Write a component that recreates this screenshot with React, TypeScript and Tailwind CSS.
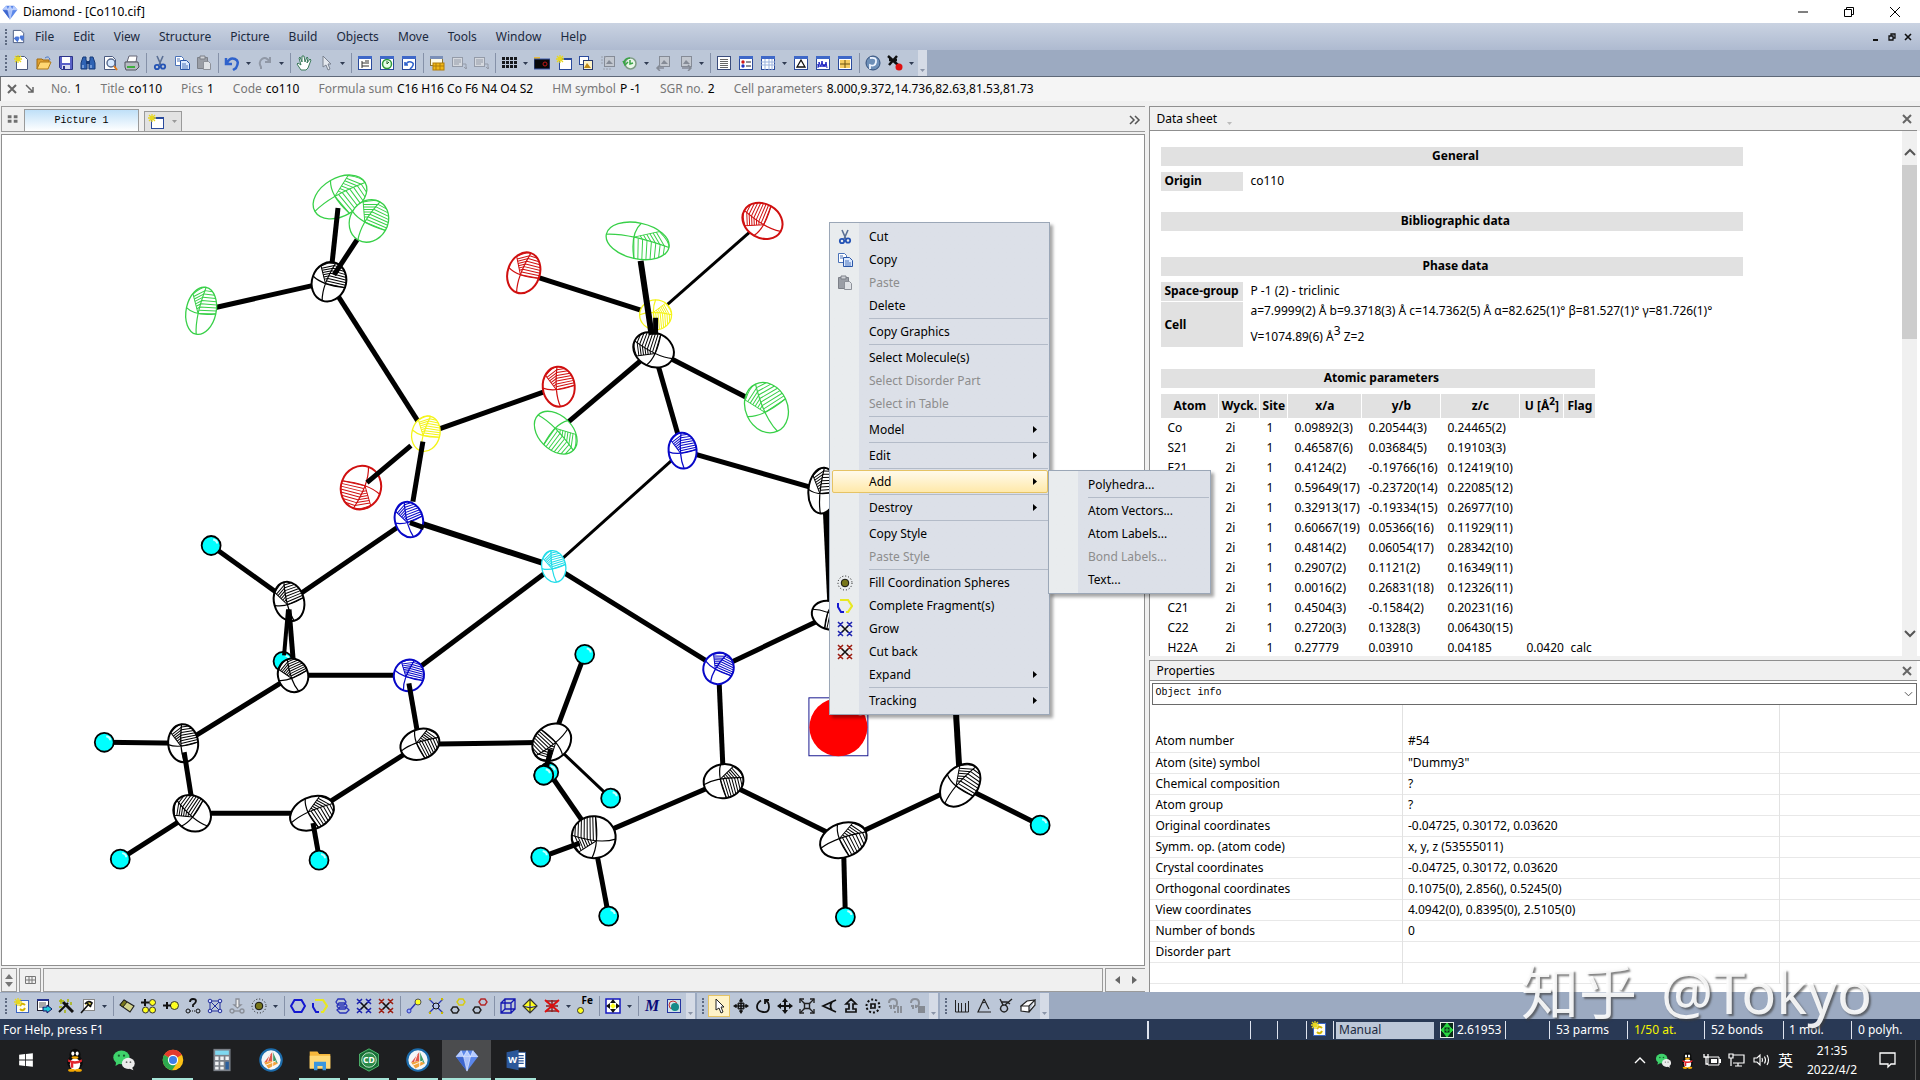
import type { ReactNode } from "react";

/* ---------- 16px toolbar glyphs ---------- */

const sheet = (
  <path d="M2.5 1.5h8l3 3v10h-11z" fill="#fff" stroke="#4a5a80" />
);
const windowFrame = (
  <>
    <rect x="1.5" y="1.5" width="13" height="13" fill="#fff" stroke="#2a4a9c" />
    <rect x="1" y="1" width="14" height="3" fill="#3f68c8" />
  </>
);
const star = (
  <path d="M4 0v8M0 4h8M1 1l6 6M7 1L1 7" stroke="#e8d820" strokeWidth="1.3" />
);
const crossGrid = (a: string, b: string) => (
  <>
    <path d="M1 1l5 5M6 1L1 6M10 1l5 5M15 1l-5 5M1 10l5 5M6 10l-5 5M10 10l5 5M15 10l-5 5" stroke={a} strokeWidth="1.5" />
    <path d="M5 5l6 6M11 5l-6 6" stroke={b} strokeWidth="1.5" />
  </>
);
const greyWindow = (
  <>
    <rect x="1.5" y="2.5" width="10" height="9" fill="#d4d8de" stroke="#949ba8" />
    <path d="M3 5h7M3 7h7M3 9h5" stroke="#949ba8" />
    <path d="M11 9h4v5M13 12l2 2 1-2" stroke="#949ba8" fill="none" />
  </>
);
const greyPicture = (
  <>
    <rect x="4.5" y="1.5" width="10" height="10" fill="#c2c7cf" stroke="#858b96" />
    <path d="M6 9l3-4 4 4z" fill="#858b96" />
  </>
);
const twoRings = (a: string, b: string) => (
  <>
    <path d="M7 4l2-3h4l2 3-2 3H9z" fill="none" stroke={a} strokeWidth="1.4" />
    <path d="M1 12l2-3h4l2 3-2 3H3z" fill="none" stroke={b} strokeWidth="1.4" />
  </>
);

const glyphs: Record<string, ReactNode> = {
  new: <>{sheet}{star}</>,
  open: (
    <>
      <path d="M1 14V4h5l1 1h6v3" fill="#e0a030" stroke="#a06a10" />
      <path d="M1 14l3-7h11l-3 7z" fill="#ffd873" stroke="#b07a18" />
      <path d="M9 3q4-3 5 2" fill="none" stroke="#4a78c8" />
    </>
  ),
  save: (
    <>
      <path d="M1.5 1.5h13v13h-11l-2-2z" fill="#5a62c8" stroke="#2c3488" />
      <rect x="4" y="2" width="8" height="6" fill="#fff" />
      <rect x="4" y="10" width="8" height="4" fill="#d8dcf0" />
      <rect x="5" y="11" width="2" height="3" fill="#2c3488" />
    </>
  ),
  find: (
    <>
      <path d="M3 2h3v3l1 2v7H1V8zM10 2h3l2 6v6H9V7l1-2z" fill="#2f63b4" stroke="#173a78" />
      <path d="M6 6h4v3H6z" fill="#173a78" />
      <path d="M3 10v3M11 10v3" stroke="#b8d4ff" />
    </>
  ),
  preview: (
    <>
      {sheet}
      <circle cx="9" cy="8" r="4" fill="#d6e8ff" stroke="#55688c" strokeWidth="1.4" />
      <path d="M12 11l3 4" stroke="#e07818" strokeWidth="2" />
    </>
  ),
  print: (
    <>
      <path d="M5 1h8l-1 6H3z" fill="#fff" stroke="#667" />
      <path d="M1 7h13l1 5-3 3H2l-1-3z" fill="#b8bcc4" stroke="#50555e" />
      <path d="M3 12h8" stroke="#3fae3f" strokeWidth="2" />
    </>
  ),
  cut: (
    <>
      <path d="M5 1l4 9M11 1L7 10" stroke="#5a6f94" strokeWidth="1.6" />
      <circle cx="5" cy="12" r="2.2" fill="none" stroke="#2453b5" strokeWidth="1.8" />
      <circle cx="11" cy="11.5" r="2.2" fill="none" stroke="#2453b5" strokeWidth="1.8" />
    </>
  ),
  copy: (
    <>
      <path d="M1.5 1.5h6l2 2v7h-8z" fill="#fff" stroke="#4a72b8" />
      <path d="M6.5 5.5h6l3 3v6h-9z" fill="#dbe9ff" stroke="#2a56a8" />
      <path d="M3 4h3M3 6h3M8 9h4M8 11h6M8 13h6" stroke="#4a72b8" />
    </>
  ),
  paste: (
    <>
      <path d="M1.5 2.5h10v11h-10z" fill="#9a9ea6" stroke="#7c8088" />
      <path d="M4 1h5v3H4z" fill="#d0d3d8" stroke="#7c8088" />
      <path d="M7.5 6.5h5l2 2v6h-7z" fill="#dfe2e6" stroke="#8d9199" />
    </>
  ),
  undo: <path d="M2 3v6h6M3 8q3-6 8-4t1 9l-3 2" fill="none" stroke="#2f62cc" strokeWidth="2.5" />,
  redo: <path d="M13 2v5H8M13 7Q9 1 5 4t-1 8v2" fill="none" stroke="#9098a6" strokeWidth="2" />,
  hand: (
    <path d="M5 15L1 9l1-1 3 2-2-7 1-1 2 5V1h2l1 6 2-5 1 1-1 5 3-4 1 1-3 8-2 2z" fill="#fff" stroke="#3a7a5a" />
  ),
  pointer: <path d="M5 1v11l3-2 2 5 2-1-2-5h3z" fill="#e4e8ee" stroke="#7a8290" />,
  tree: <>{windowFrame}<path d="M5 6v7M5 8h7M5 11h7M8 6h4" stroke="#333" /></>,
  history: (
    <>
      {windowFrame}
      <circle cx="8" cy="9" r="4.5" fill="#e7ffe7" stroke="#2f9a3a" strokeWidth="1.5" />
      <path d="M8 6v3l2-2" stroke="#24602a" fill="none" />
    </>
  ),
  undoWindow: <>{windowFrame}<path d="M4 7v3h3M5 10q1-4 5-3t1 5l-2 2" fill="none" stroke="#2f62cc" strokeWidth="1.6" /></>,
  chartTable: (
    <>
      <rect x="1.5" y="1.5" width="12" height="9" fill="#fffbe8" stroke="#8a7430" />
      <rect x="1" y="1" width="13" height="3" fill="#7a8fb8" />
      <rect x="4" y="8" width="11" height="7" fill="#f0b818" stroke="#b07c08" />
      <path d="M7 8v7M11 8v7M4 11h11" stroke="#b07c08" />
    </>
  ),
  greyA: greyWindow,
  greyB: greyWindow,
  grid: (
    <path d="M1 2h3v3H1zM5 2h3v3H5zM9 2h3v3H9zM13 2h3v3h-3zM1 6h3v3H1zM5 6h3v3H5zM9 6h3v3H9zM13 6h3v3h-3zM1 10h3v3H1zM5 10h3v3H5zM9 10h3v3H9zM13 10h3v3h-3z" fill="#16181c" />
  ),
  blackPic: (
    <>
      <path d="M0 4V2h6v2z" fill="#e8b93c" />
      <rect x="0" y="4" width="16" height="10" fill="#080808" stroke="#3a58a8" />
      <circle cx="11" cy="9" r="2" fill="none" stroke="#c01818" />
    </>
  ),
  newPic: (
    <>
      <rect x="3.5" y="3.5" width="12" height="11" fill="#fff" stroke="#2a4a9c" />
      <path d="M3 4h13" stroke="#2a4a9c" strokeWidth="2" />
      {star}
    </>
  ),
  pics: (
    <>
      <rect x="1.5" y="1.5" width="9" height="8" fill="#fff" stroke="#2a4a9c" />
      <rect x="5.5" y="5.5" width="9" height="9" fill="#fff4c8" stroke="#2a3a6c" />
      <path d="M6 13l3-5 4 5z" fill="#c08a18" />
    </>
  ),
  greyPics: <>{greyPicture}<path d="M1 2h6M1 5h3M1 8h3M3 14h8" stroke="#9aa0ac" strokeDasharray="2 1" /></>,
  refresh: (
    <>
      <circle cx="8.5" cy="8.5" r="5.5" fill="#e8f6e8" stroke="#7d9c84" strokeWidth="1.5" />
      <path d="M2 9q0-6 6-6M1 6l2 4 3-3M8 5v4l3-1" fill="none" stroke="#39a545" strokeWidth="1.5" />
    </>
  ),
  prevPic: <>{greyPicture}<path d="M9 13H2M5 10l-3 3 3 3" stroke="#858b96" strokeWidth="1.5" fill="none" /></>,
  nextPic: <>{greyPicture}<path d="M5 13h9M11 10l3 3-3 3" stroke="#858b96" strokeWidth="1.5" fill="none" /></>,
  textDoc: <><rect x="1.5" y="1.5" width="13" height="13" fill="#fff" stroke="#3a4c7c" /><path d="M4 4.5h8M4 6.5h8M4 8.5h8M4 10.5h8M4 12.5h8" stroke="#666" /></>,
  props: (
    <>
      {windowFrame}
      <path d="M8 7h5M8 11h5" stroke="#223" />
      <circle cx="5" cy="7" r="1.7" fill="#d01818" />
      <circle cx="5" cy="11" r="1.7" fill="#2433c0" />
    </>
  ),
  table: <>{windowFrame}<path d="M1 7h14M1 10h14M5 4v11M9 4v11M12 4v11" stroke="#9db4de" /></>,
  triangle: <>{windowFrame}<path d="M8 5l4 7H4z" fill="none" stroke="#111" strokeWidth="1.3" /></>,
  spectrum: <>{windowFrame}<path d="M3 13V9l1 3V7l2 5 1-6 1 6 1-3 1 3 1-5 1 6" fill="none" stroke="#1a20c0" /></>,
  yellowTable: <>{windowFrame}<path d="M3 5h10v8H3z" fill="#f5cd62" /><path d="M3 9h10M8 5v8" stroke="#6b5310" /></>,
  globe: (
    <>
      <circle cx="8" cy="8" r="7" fill="#6d8fb8" stroke="#33507c" />
      <path d="M5 3q7-1 6 4t-6 3v4" fill="none" stroke="#eef4ff" strokeWidth="1.8" />
    </>
  ),
  camera: (
    <>
      <path d="M1 1l10 9M10 1L2 10M2 5h8" stroke="#111" strokeWidth="2.5" />
      <circle cx="12" cy="12" r="3.5" fill="#e01010" />
    </>
  ),
  autoBuild: (
    <>
      <rect x="2.5" y="2.5" width="12" height="12" fill="#fffdf0" stroke="#3b66c4" />
      <path d="M6 8q2-4 5-1M11 10q-2 4-5 1" stroke="#d4b400" strokeWidth="2" fill="none" />
      {star}
    </>
  ),
  runList: (
    <>
      <rect x="1.5" y="1.5" width="11" height="11" fill="#fff" stroke="#223" />
      <path d="M1 2h12" stroke="#22308c" strokeWidth="2" />
      <path d="M3 5h7M3 7h7M3 9h4" stroke="#555" />
      <path d="M7 9h4V7l5 4-5 4v-2H7z" fill="#20c8d8" stroke="#116" />
    </>
  ),
  wand: (
    <>
      <path d="M5 4l10 10" stroke="#111" strokeWidth="3" />
      <path d="M1 14l9-9" stroke="#111" strokeWidth="2" />
      <path d="M3 1v5M1 3h5M10 1v3M1 9h3M13 4v3M7 12v3" stroke="#a8b400" strokeWidth="1.5" />
    </>
  ),
  hammer: (
    <>
      <rect x="3.5" y="1.5" width="11" height="11" fill="#fff" stroke="#888" />
      <path d="M1 15l7-8M6 4l5 5M5 6q3-4 7-1l-2 4" stroke="#111" strokeWidth="1.6" fill="#e6d44a" />
    </>
  ),
  eraser: (
    <>
      <path d="M1 7l4-5 10 6-4 6z" fill="#d4d48a" stroke="#222" strokeWidth="1.2" />
      <path d="M1 7l4-5 3 2-4 5z" fill="#77761a" stroke="#222" />
    </>
  ),
  addAtoms: (
    <>
      <g fill="#ffff20" stroke="#333">
        <circle cx="11.5" cy="4.5" r="3" /><circle cx="4.5" cy="12" r="3" /><circle cx="11.5" cy="12" r="3" />
      </g>
      <path d="M4 1v7M0 4.5h8" stroke="#111" strokeWidth="2" />
    </>
  ),
  addAtom: <><circle cx="11.5" cy="7.5" r="4" fill="#ffff20" stroke="#333" /><path d="M4 4v7M0 7.5h8" stroke="#111" strokeWidth="2" /></>,
  unknown: (
    <>
      <path d="M5 4q0-3 3-3t3 2-3 4v2" fill="none" stroke="#111" strokeWidth="1.8" />
      <circle cx="3" cy="13" r="2" fill="none" stroke="#111" /><circle cx="13" cy="13" r="2" fill="none" stroke="#111" />
      <path d="M5 13h6" stroke="#111" strokeDasharray="1 1" />
    </>
  ),
  net: (
    <>
      <path d="M3 3h10v10H3zM3 3l10 10M13 3L3 13" fill="none" stroke="#24309c" />
      <g fill="#cfd8ff" stroke="#24309c">
        <circle cx="3" cy="3" r="1.8" /><circle cx="13" cy="3" r="1.8" /><circle cx="3" cy="13" r="1.8" /><circle cx="13" cy="13" r="1.8" />
      </g>
    </>
  ),
  insert: (
    <g fill="none" stroke="#8a8f98" strokeWidth="1.3">
      <path d="M7 1h3v6h2l-3.500 3L5 7h2z" fill="#eee" /><circle cx="3" cy="13" r="2" /><circle cx="13" cy="13" r="2" /><path d="M5 13h6" />
    </g>
  ),
  sphere: (
    <>
      <circle cx="8" cy="8" r="7" fill="none" stroke="#111" strokeDasharray="1 2" />
      <circle cx="8" cy="8" r="3.8" fill="#77761a" stroke="#111" />
    </>
  ),
  hexagon: <path d="M4.500 2h7l3.500 6-3.500 6h-7L1 8z" fill="none" stroke="#1418d0" strokeWidth="2" />,
  fragment: (
    <>
      <path d="M1 5v4l3 5h3" fill="none" stroke="#1418d0" strokeWidth="2" />
      <path d="M3 2h8l4 6-4 6H9" fill="none" stroke="#e8e822" strokeWidth="2.2" />
    </>
  ),
  layers: (
    <g fill="none" stroke="#2a34b8" strokeWidth="1.3">
      <path d="M4 1h6l2 3-2 3H4L2 4zM5 5h6l2 3-2 3H5L3 8zM6 9h6l3 3-3 3H6l-3-3z" />
    </g>
  ),
  grow: crossGrid("#1c22b0", "#111"),
  cutBack: crossGrid("#9c1c10", "#111"),
  bond: (
    <>
      <path d="M4 12l7-8" stroke="#2a34b8" strokeWidth="1.5" />
      <circle cx="12" cy="4" r="3" fill="#ffff20" stroke="#555" />
      <circle cx="3" cy="13" r="2" fill="#9fb4ff" stroke="#2a34b8" />
    </>
  ),
  star4: (
    <>
      <path d="M1 1l14 14M15 1L1 15M4 8h8" stroke="#2a34b8" strokeWidth="1.3" />
      <circle cx="8" cy="8" r="3" fill="#b5c3ea" stroke="#111" />
      <path d="M1 1h2M13 1h2M1 15h2M13 15h2" stroke="#c8b800" strokeWidth="2.5" />
    </>
  ),
  ringsYellow: twoRings("#d8cc10", "#222"),
  ringsRed: twoRings("#b42828", "#222"),
  cell: <path d="M1 5h10v10H1zM5 1h10v10H5zM1 5l4-4M11 5l4-4M1 15l4-4M11 15l4-4" fill="none" stroke="#1418b0" strokeWidth="1.3" />,
  polyhedron: <path d="M8 1l7 7-7 7-7-7zM8 1v14M1 8l7 2 7-2" fill="#ffff20" stroke="#333" strokeWidth="1.2" />,
  destroy: (
    <>
      <path d="M2 3l12 10M14 3L2 13M2 8h12M2 3h12M2 13h12M8 2v12" stroke="#882222" strokeWidth="1.5" />
      <path d="M1 14L15 2M1 2l14 12" stroke="#e01010" strokeWidth="1.8" />
    </>
  ),
  fit: (
    <>
      <rect x="1" y="1" width="14" height="14" fill="#fff" stroke="#1418c0" strokeWidth="1.5" />
      <path d="M8 1l3 4H5zM8 15l3-4H5zM1 8l4-3v6zM15 8l-4-3v6z" fill="#111" />
      <path d="M8 5l3 3-3 3-3-3z" fill="#ffff20" />
    </>
  ),
  circlePic: (
    <>
      <rect x="1.5" y="1.5" width="13" height="13" fill="#cfe4ea" stroke="#2433a0" />
      <circle cx="7" cy="7" r="4" fill="none" stroke="#c83030" />
      <circle cx="9" cy="9" r="4" fill="#148a88" />
    </>
  ),
  select: <path d="M5 1v11l3-2 2 5 2-1-2-5h3z" fill="#fff" stroke="#222" />,
  rotateXY: (
    <>
      <path d="M8 2v12M2 8h12" stroke="#111" strokeWidth="1.5" />
      <ellipse cx="8" cy="8" rx="5" ry="2.5" fill="none" stroke="#111" />
      <ellipse cx="8" cy="8" rx="2.5" ry="5" fill="none" stroke="#111" />
      <path d="M8 0l2 3H6zM8 16l2-3H6zM0 8l3-2v4zM16 8l-3-2v4z" fill="#111" />
    </>
  ),
  rotateZ: <path d="M6 2.5Q2 5 2 9t6 5 6-5-4-6M14 2h-4v4" fill="none" stroke="#111" strokeWidth="1.8" />,
  move: (
    <>
      <path d="M8 2v12M2 8h12" stroke="#111" strokeWidth="2" />
      <path d="M8 0l3 4H5zM8 16l3-4H5zM0 8l4-3v6zM16 8l-4-3v6z" fill="#111" />
    </>
  ),
  zoom: (
    <>
      <path d="M1 1l5 5M15 1l-5 5M15 15l-5-5M1 15l5-5" stroke="#222" strokeWidth="1.4" />
      <path d="M1 5V1h4M11 1h4v4M15 11v4h-4M5 15H1v-4M5.5 5.5h5v5h-5z" fill="none" stroke="#222" strokeWidth="1.4" />
    </>
  ),
  angle: <path d="M15 2L2 8l13 6M11 4q-3 4 0 8" fill="none" stroke="#111" strokeWidth="1.8" />,
  tower: <path d="M8 1L3 6h3v5H3v3h10v-3h-3V6h3z" fill="none" stroke="#111" strokeWidth="1.7" />,
  spin: (
    <>
      <circle cx="8" cy="8" r="6.500" fill="none" stroke="#111" strokeWidth="2" strokeDasharray="2 2" />
      <path d="M6 11V6h4v4H7" fill="none" stroke="#111" strokeWidth="1.7" />
    </>
  ),
  greyC: <path d="M2 5q0-4 4-4t4 4-3 3v3M2 8h2v3M11 8v7M14 8v7M8 13v2" fill="none" stroke="#8a8f98" strokeWidth="2" />,
  greyD: <><path d="M2 5q0-4 4-4t4 4-3 3v2M2 8h2v3" fill="none" stroke="#8a8f98" strokeWidth="2" /><rect x="9" y="8" width="7" height="7" fill="#858a92" /></>,
  ruler: <path d="M1.5 2v12h13V3M4.500 5v9M7.500 5v9M11.500 5v9" fill="none" stroke="#222" />,
  angleTool: <path d="M8 1L2 14h13M8 1l5 10M6 5l4-1" fill="none" stroke="#222" strokeWidth="1.2" />,
  torsion: <path d="M6 7a3.500 3.500 0 1 0 .1 0M5 7L2 1M7 7l7-6M4 4h5l3 2" fill="none" stroke="#222" strokeWidth="1.4" />,
  plane: <path d="M1 8l6-5 8-1-6 6zM1 8v5l8 1V8M9 14l6-7V2" fill="#fff" stroke="#222" strokeWidth="1.2" />,
  panes: <path d="M1 3h5v4H1zM9 3h5v4H9zM1 9h5v4H1zM9 9h5v4H9z" fill="#707070" />,
};

function Glyph({ name, size = "size-4" }: { name: string; size?: string }) {
  return (
    <svg viewBox="0 0 16 16" className={size} fill="none" aria-hidden="true">
      {glyphs[name]}
    </svg>
  );
}

/* ---------- toolbars ---------- */

function Grip() {
  return <span className="h-4 w-0 mx-1 border-l-2 border-dotted border-[#5f6b82]" />;
}

function ToolGroup({ items }: { items: string[] }) {
  return (
    <div className="flex items-center h-full bg-[#bcc7d8] pl-px">
      <Grip />
      {items.map((item, i) => {
        if (item === "|") {
          return <span key={i} className="w-[6px] h-5 flex justify-center"><span className="w-px h-full bg-[#8591a8]" /></span>;
        }
        if (item === "v") {
          return (
            <button key={i} aria-label="More options" className="w-[11px] h-5 flex items-center justify-center">
              <svg viewBox="0 0 5 3" className="w-[5px] h-[3px]"><path d="M0 0h5L2.500 3z" fill="#2f3b52" /></svg>
            </button>
          );
        }
        return (
          <button
            key={i}
            aria-label={item}
            className={`w-[22px] h-[22px] flex items-center justify-center ${item === "select" ? "bg-[#fff3c8] border border-[#e5c365]" : ""}`}
          >
            {item === "M" && <span className="font-['Liberation_Serif',serif] text-base leading-4 font-bold italic text-[#0a0a78]">M</span>}
            {item === "Fe" && (
              <span className="relative size-4">
                <span className="absolute right-0 -top-1 font-['Noto_Sans',sans-serif] text-[10px] leading-3 font-bold text-black">Fe</span>
                <span className="absolute left-0 bottom-0 size-[7px] rounded-full bg-[#ffff20] border border-[#333]" />
              </span>
            )}
            {item !== "M" && item !== "Fe" && <Glyph name={item} />}
          </button>
        );
      })}
      <span className="ml-px w-[9px] h-full bg-[#d5dbe6] flex items-end justify-center pb-1">
        <svg viewBox="0 0 5 3" className="w-[5px] h-[3px]"><path d="M0 0h5L2.500 3z" fill="#8b95a8" /></svg>
      </span>
    </div>
  );
}

const mainTools = [
  "new", "open", "save", "find", "preview", "print", "|",
  "cut", "copy", "paste", "|",
  "undo", "v", "redo", "v", "|",
  "hand", "pointer", "v", "|",
  "tree", "history", "undoWindow", "|",
  "chartTable", "greyA", "greyB", "|",
  "grid", "v", "blackPic", "newPic", "pics", "greyPics", "refresh", "v", "prevPic", "nextPic", "v", "|",
  "textDoc", "props", "table", "v", "triangle", "spectrum", "yellowTable", "|",
  "globe", "camera", "v",
];
const buildTools = [
  "autoBuild", "runList", "wand", "hammer", "v", "|",
  "eraser", "addAtoms", "addAtom", "unknown", "net", "insert", "sphere", "v", "|",
  "hexagon", "fragment", "layers", "grow", "cutBack", "|",
  "bond", "star4", "ringsYellow", "ringsRed", "|",
  "cell", "polyhedron", "destroy", "v", "Fe", "|",
  "fit", "v", "|", "M", "circlePic",
];
const moveTools = ["select", "rotateXY", "rotateZ", "move", "zoom", "angle", "tower", "spin", "greyC", "greyD"];
const measureTools = ["ruler", "angleTool", "torsion", "plane"];

/* ---------- molecule ---------- */

const BLACK = "#000000";
const RED = "#d01010";
const GREEN = "#38d048";
const BLUE = "#0808c8";
const YELLOW = "#f4f418";
const CYAN = "#20dce8";

// x, y, rx, ry, rotation, colour
type Atom = [number, number, number, number, number, string];

const atoms: Atom[] = [
  [340, 196, 29, 19, -30, GREEN],
  [369, 220, 22, 19, -60, GREEN],
  [329, 281, 20, 17, -70, BLACK],
  [201, 310, 24, 15, -78, GREEN],
  [524, 272, 21, 16, -70, RED],
  [559, 386, 20, 16, 265, RED],
  [556, 432, 25, 17, 45, GREEN],
  [426, 433, 18, 14, -75, YELLOW],
  [361, 487, 22, 20, 110, RED],
  [409, 519, 18, 14, 255, BLUE],
  [554, 566, 16, 12, 260, CYAN],
  [289, 601, 20, 15, 255, BLACK],
  [293, 675, 17, 15, 250, BLACK],
  [409, 675, 16, 15, 290, BLUE],
  [183, 743, 19, 15, 265, BLACK],
  [192, 813, 20, 17, 220, BLACK],
  [312, 813, 23, 16, -25, BLACK],
  [420, 744, 20, 15, -20, BLACK],
  [552, 742, 21, 17, 140, BLACK],
  [594, 837, 22, 21, 185, BLACK],
  [763, 220, 21, 17, 210, RED],
  [638, 240, 32, 18, 12, GREEN],
  [656, 314, 16, 15, 0, YELLOW],
  [654, 349, 21, 17, 205, BLACK],
  [767, 407, 26, 21, 245, GREEN],
  [683, 450, 18, 14, 265, BLUE],
  [823, 490, 23, 14, -85, BLACK],
  [830, 615, 18, 14, 20, BLACK],
  [719, 668, 16, 15, -60, BLUE],
  [724, 781, 20, 17, -10, BLACK],
  [844, 840, 24, 17, -20, BLACK],
  [961, 785, 24, 17, -50, BLACK],
];

const hydrogens = [
  [211, 545], [283, 661], [104, 742], [120, 859], [319, 860], [585, 654], [611, 798],
  [549, 772], [544, 775], [541, 857], [609, 916], [846, 917], [1041, 825],
];

// x1, y1, x2, y2, width
const bonds = [
  [329, 281, 201, 310, 5], [329, 281, 426, 433, 5], [426, 433, 559, 386, 5],
  [409, 519, 554, 566, 6], [409, 519, 289, 601, 5], [211, 545, 289, 601, 5],
  [554, 566, 409, 675, 5], [554, 566, 683, 450, 3], [554, 566, 719, 668, 5],
  [293, 675, 409, 675, 5], [293, 675, 183, 743, 5], [183, 743, 104, 742, 5],
  [192, 813, 120, 859, 5], [192, 813, 312, 813, 5],
  [312, 813, 420, 744, 5], [420, 744, 552, 742, 5],
  [552, 742, 585, 654, 5], [552, 742, 611, 798, 3], [594, 837, 549, 772, 5],
  [594, 837, 724, 781, 5], [594, 837, 609, 916, 5],
  [524, 272, 656, 314, 5], [656, 314, 763, 220, 3],
  [654, 349, 556, 432, 5], [654, 349, 767, 407, 5], [654, 349, 683, 450, 5],
  [683, 450, 823, 490, 5], [826, 490, 832, 615, 7], [830, 615, 719, 668, 5],
  [719, 668, 724, 781, 5], [724, 781, 844, 840, 5], [844, 840, 961, 785, 5],
  [961, 785, 1041, 825, 5], [844, 840, 846, 917, 5], [961, 785, 956, 700, 6],
];

// bonds that come out of the front face of an atom
const frontBonds = [
  [338, 207, 332, 263, 5], [357, 239, 334, 274, 5], [423, 441, 413, 501, 5],
  [411, 445, 367, 482, 5], [289, 609, 293, 658, 5],
  [288, 609, 284, 655, 4], [409, 683, 417, 729, 5], [184, 752, 191, 796, 5],
  [313, 823, 318, 851, 5], [551, 749, 547, 766, 5], [580, 843, 550, 854, 5],
  [641, 260, 652, 334, 6], [656, 317, 656, 334, 5], [410, 522, 424, 527, 5],
];

function Ellipsoid({ atom }: { atom: Atom }) {
  const [x, y, rx, ry, rotation, color] = atom;
  const cx = -0.14 * rx;
  const cy = -0.16 * ry;
  const hatch: string[] = [];
  const steps = 8;
  for (let i = 0; i < steps; i++) {
    const t = i / steps;
    const sx = cx + (rx - cx) * t;
    const sy = cy * (1 - t);
    hatch.push(`M${sx} ${sy}L${rx * t} ${ry * Math.sqrt(1 - t * t)}`);
    if (i > 1) hatch.push(`M${sx} ${sy}L${cx + rx * 0.75 * t} ${cy - ry * 0.6 * t}`);
  }
  const thin = color === GREEN || color === YELLOW || color === CYAN;
  return (
    <g transform={`translate(${x} ${y}) rotate(${rotation})`} stroke={color} fill="none">
      <ellipse rx={rx} ry={ry} fill="#fff" strokeWidth={thin ? 1.3 : 2} />
      <path d={`M${-rx} 0Q${2 * cx} ${2 * cy} ${rx} 0M0 ${-ry}Q${2 * cx} ${2 * cy} 0 ${ry}`} strokeWidth="1.2" />
      <path d={`M${cx} ${cy}L${cx + rx * 0.75} ${cy - ry * 0.6}Q${rx} ${-ry * 0.3} ${rx} 0`} />
      <path d={hatch.join("")} strokeWidth="1" />
    </g>
  );
}

function Molecule() {
  return (
    <svg viewBox="2 134 1143 831" className="block w-full h-full" role="img" aria-label="Crystal structure of Co110">
      <g stroke="#000">
        {bonds.map(([x1, y1, x2, y2, w], i) => (
          <line key={i} x1={x1} y1={y1} x2={x2} y2={y2} strokeWidth={w} />
        ))}
      </g>
      {hydrogens.map(([x, y], i) => (
        <g key={i}>
          <circle cx={x} cy={y} r="9.5" fill="#00ffff" stroke="#000" strokeWidth="1.8" />
          <path d={`M${x + 2} ${y - 6}q4 1 4 4`} stroke="#c8ffff" strokeWidth="2" fill="none" />
        </g>
      ))}
      {atoms.map((atom, i) => (
        <Ellipsoid key={i} atom={atom} />
      ))}
      <g>
        <circle cx="544" cy="775" r="9.5" fill="#00ffff" stroke="#000" strokeWidth="1.8" />
        <path d="M546 769q4 1 4 4" stroke="#c8ffff" strokeWidth="2" fill="none" />
      </g>
      <g stroke="#000">
        {frontBonds.map(([x1, y1, x2, y2, w], i) => (
          <line key={i} x1={x1} y1={y1} x2={x2} y2={y2} strokeWidth={w} />
        ))}
      </g>
      <rect x="809.5" y="697.5" width="59" height="58" fill="#fff" stroke="#1a1a90" />
      <circle cx="839" cy="727" r="29" fill="#ff0000" />
      <path d="M850 709q10 10 16 4l-5-12z" fill="#f3dada" />
    </svg>
  );
}

/* ---------- context menu ---------- */

type MenuEntry = { label: string; icon?: string; off?: boolean; sub?: boolean; active?: boolean } | "sep";

const contextMenu: MenuEntry[] = [
  { label: "Cut", icon: "cut" },
  { label: "Copy", icon: "copy" },
  { label: "Paste", icon: "paste", off: true },
  { label: "Delete" },
  "sep",
  { label: "Copy Graphics" },
  "sep",
  { label: "Select Molecule(s)" },
  { label: "Select Disorder Part", off: true },
  { label: "Select in Table", off: true },
  "sep",
  { label: "Model", sub: true },
  "sep",
  { label: "Edit", sub: true },
  "sep",
  { label: "Add", sub: true, active: true },
  "sep",
  { label: "Destroy", sub: true },
  "sep",
  { label: "Copy Style" },
  { label: "Paste Style", off: true },
  "sep",
  { label: "Fill Coordination Spheres", icon: "sphere" },
  { label: "Complete Fragment(s)", icon: "fragment" },
  { label: "Grow", icon: "grow" },
  { label: "Cut back", icon: "cutBack" },
  { label: "Expand", sub: true },
  "sep",
  { label: "Tracking", sub: true },
];

const addMenu: MenuEntry[] = [
  { label: "Polyhedra..." },
  "sep",
  { label: "Atom Vectors..." },
  { label: "Atom Labels..." },
  { label: "Bond Labels...", off: true },
  { label: "Text..." },
];

function Menu({ entries, className }: { entries: MenuEntry[]; className: string }) {
  return (
    <div
      role="menu"
      className={`absolute border border-[#9ba7b7] bg-linear-to-r from-[#e9ecee] from-[29px] to-[#dce0e8] to-[29px] py-[2px] pl-[2px] pr-px shadow-[3px_3px_3px_rgba(0,0,0,0.35)] ${className}`}
    >
      {entries.map((entry, i) =>
        entry === "sep" ? (
          <div key={i} className="h-[3px] pt-px ml-[37px]"><div className="h-px bg-[#b3bbc8]" /></div>
        ) : (
          <button
            key={i}
            role="menuitem"
            disabled={entry.off}
            className={`w-full h-[23px] flex items-center text-left pr-2 ${entry.off ? "text-[#8d8d8d]" : "text-black"} ${
              entry.active ? "rounded-xs bg-linear-to-b from-[#fffbef] to-[#ffe8a6] outline outline-[#e5c365] -outline-offset-1" : ""
            }`}
          >
            <span className="w-[37px] flex pl-[5px] shrink-0">{entry.icon && <Glyph name={entry.icon} />}</span>
            <span className="flex-1 whitespace-nowrap">{entry.label}</span>
            {entry.sub && <svg viewBox="0 0 4 7" className="w-1 h-[7px] mr-[3px]"><path d="M0 0l4 3.500L0 7z" fill="#000" /></svg>}
          </button>
        ),
      )}
    </div>
  );
}

/* ---------- side panels ---------- */

const parameters = [
  ["Co", "2i", "1", "0.09892(3)", "0.20544(3)", "0.24465(2)", "", ""],
  ["S21", "2i", "1", "0.46587(6)", "0.03684(5)", "0.19103(3)", "", ""],
  ["F21", "2i", "1", "0.4124(2)", "-0.19766(16)", "0.12419(10)", "", ""],
  ["F22", "2i", "1", "0.59649(17)", "-0.23720(14)", "0.22085(12)", "", ""],
  ["F23", "2i", "1", "0.32913(17)", "-0.19334(15)", "0.26977(10)", "", ""],
  ["O21", "2i", "1", "0.60667(19)", "0.05366(16)", "0.11929(11)", "", ""],
  ["O22", "2i", "1", "0.4814(2)", "0.06054(17)", "0.28342(10)", "", ""],
  ["N21", "2i", "1", "0.2907(2)", "0.1121(2)", "0.16349(11)", "", ""],
  ["N22", "2i", "1", "0.0016(2)", "0.26831(18)", "0.12326(11)", "", ""],
  ["C21", "2i", "1", "0.4504(3)", "-0.1584(2)", "0.20231(16)", "", ""],
  ["C22", "2i", "1", "0.2720(3)", "0.1328(3)", "0.06430(15)", "", ""],
  ["H22A", "2i", "1", "0.27779", "0.03910", "0.04185", "0.0420", "calc"],
];

const properties = [
  ["Atom number", "#54"],
  ["Atom (site) symbol", "\"Dummy3\""],
  ["Chemical composition", "?"],
  ["Atom group", "?"],
  ["Original coordinates", "-0.04725, 0.30172, 0.03620"],
  ["Symm. op. (atom code)", "x, y, z (53555011)"],
  ["Crystal coordinates", "-0.04725, 0.30172, 0.03620"],
  ["Orthogonal coordinates", "0.1075(0), 2.856(), 0.5245(0)"],
  ["View coordinates", "4.0942(0), 0.8395(0), 2.5105(0)"],
  ["Number of bonds", "0"],
  ["Disorder part", ""],
  ["", ""],
];

function CloseMark() {
  return (
    <svg viewBox="0 0 10 10" className="size-[10px]"><path d="M1 1l8 8M9 1L1 9" stroke="#666" strokeWidth="2" /></svg>
  );
}

function Band({ children }: { children: ReactNode }) {
  return <h3 className="h-[19px] leading-[18px] pl-[6px] bg-[#e1e1e1] text-center font-bold">{children}</h3>;
}

function DataSheet() {
  const th = "bg-[#e1e1e1] font-bold p-0";
  return (
    <div className="flex-1 min-h-0 flex bg-white">
      <div className="flex-1 min-w-0 overflow-hidden pl-[11px] pt-4">
        <div className="w-[582px]">
          <Band>General</Band>
          <div className="flex mt-[6px] h-[19px] leading-[18px]">
            <b className="w-[82px] pl-[3px] bg-[#e1e1e1]">Origin</b>
            <span className="pl-[7px]">co110</span>
          </div>
          <div className="mt-[21px]"><Band>Bibliographic data</Band></div>
          <div className="mt-[26px]"><Band>Phase data</Band></div>
          <div className="flex mt-[6px] h-[19px] leading-[18px]">
            <b className="w-[82px] pl-[3px] bg-[#e1e1e1]">Space-group</b>
            <span className="pl-[7px]">P -1 (2) - triclinic</span>
          </div>
          <div className="flex mt-px h-[45px]">
            <b className="w-[82px] shrink-0 pl-[3px] bg-[#e1e1e1] flex items-center">Cell</b>
            <div className="pl-[7px] whitespace-nowrap leading-[18px]">
              <p>a=7.9999(2) Å b=9.3718(3) Å c=14.7362(5) Å α=82.625(1)° β=81.527(1)° γ=81.726(1)°</p>
              <p className="mt-2">V=1074.89(6) Å<sup className="text-xs leading-none">3</sup> Z=2</p>
            </div>
          </div>
        </div>
        <div className="w-[434px] mt-[22px]">
          <Band>Atomic parameters</Band>
        </div>
        <table className="mt-[6px] table-fixed w-[436px] border-separate border-spacing-x-px border-spacing-y-0 -ml-px">
          <thead>
            <tr className="h-6">
              <th className={`${th} w-[57px]`}>Atom</th>
              <th className={`${th} w-[40px]`}>Wyck.</th>
              <th className={`${th} w-[27px]`}>Site</th>
              <th className={`${th} w-[73px]`}>x/a</th>
              <th className={`${th} w-[78px]`}>y/b</th>
              <th className={`${th} w-[78px]`}>z/c</th>
              <th className={`${th} w-[43px] whitespace-nowrap`}>U [Å<sup className="text-[10px] leading-none">2</sup>]</th>
              <th className={th}>Flag</th>
            </tr>
          </thead>
          <tbody>
            {parameters.map((row) => (
              <tr key={row[0]} className="h-5">
                {row.map((cell, i) => (
                  <td key={i} className="p-0 pl-[6px] leading-5 whitespace-nowrap">{cell}</td>
                ))}
              </tr>
            ))}
          </tbody>
        </table>
      </div>
      <div className="w-[15px] mr-[3px] bg-[#f0f0f0] flex flex-col items-center py-4">
        <svg viewBox="0 0 12 8" className="w-3 h-2 shrink-0 mb-[9px] mt-px"><path d="M1 7l5-5 5 5" fill="none" stroke="#555" strokeWidth="2" /></svg>
        <div className="w-full h-[174px] bg-[#cdcdcd]" />
        <svg viewBox="0 0 12 8" className="w-3 h-2 shrink-0 mt-auto mb-[2px]"><path d="M1 1l5 5 5-5" fill="none" stroke="#555" strokeWidth="2" /></svg>
      </div>
    </div>
  );
}

function Properties() {
  return (
    <section className="flex flex-col h-[332px] bg-white border-l border-t border-[#8f8f8f]">
      <header className="h-5 mr-[3px] flex items-center justify-between pl-[6px] pr-[5px] bg-[#f0f0f0] border-b border-[#8f8f8f]">
        <h2>Properties</h2>
        <button aria-label="Close properties"><CloseMark /></button>
      </header>
      <div className="relative ml-[2px] mr-[3px] mt-[2px]">
        <select
          aria-label="Object info"
          className="w-full h-[22px] appearance-none border border-[#6a6a6a] bg-white pl-[2px] pb-[2px] font-['Liberation_Mono',monospace] text-[10px]"
        >
          <option>Object info</option>
        </select>
        <svg viewBox="0 0 10 6" className="absolute right-1 top-2 w-[9px] h-[6px] pointer-events-none"><path d="M1 1l4 4 4-4" fill="none" stroke="#444" /></svg>
      </div>
      <table className="w-full table-fixed border-collapse">
        <tbody>
          <tr className="h-[26px]">
            <td className="w-[252px] border-r border-[#e2e2e2]" />
            <td className="w-[377px] border-r border-[#e2e2e2]" />
            <td />
          </tr>
          {properties.map(([label, value], i) => (
            <tr key={i} className="h-[21px] border-b border-[#e8e8e8]">
              <td className="p-0 pl-[5px] border-r border-[#e2e2e2] leading-5">{label}</td>
              <td className="p-0 pl-[5px] border-r border-[#e2e2e2] leading-5">{value}</td>
              <td />
            </tr>
          ))}
        </tbody>
      </table>
    </section>
  );
}

/* ---------- taskbar ---------- */

const olex = (
  <>
    <circle cx="14" cy="14" r="12.500" fill="#f4f6f8" stroke="#1c6cac" strokeWidth="2.500" />
    <path d="M16 4L6 17l10-2z" fill="#e2574c" />
    <path d="M16 4l6 14-6-3z" fill="#3d9a68" />
    <path d="M6 17l10-2 6 3-11 6z" fill="#f2a23c" />
    <path d="M13 8l-3 8M16 4v19M8 20l12-5" stroke="#fff" fill="none" />
  </>
);
const wechat = (
  <>
    <ellipse cx="11" cy="11" rx="9.500" ry="8" fill="#3ed26b" />
    <path d="M5 16l-1 5 5-3z" fill="#3ed26b" />
    <circle cx="8" cy="9" r="1.300" fill="#1a5c30" /><circle cx="14" cy="9" r="1.300" fill="#1a5c30" />
    <ellipse cx="19" cy="18" rx="7.500" ry="6.500" fill="#ececec" />
    <path d="M23 22l2 4-5-2z" fill="#ececec" />
    <circle cx="17" cy="16.500" r="1" fill="#666" /><circle cx="21.500" cy="16.500" r="1" fill="#666" />
  </>
);
const qq = (
  <>
    <ellipse cx="14" cy="17" rx="9" ry="9" fill="#0b0b0b" />
    <ellipse cx="14" cy="8" rx="6.500" ry="7" fill="#0b0b0b" />
    <ellipse cx="14" cy="19" rx="6" ry="7" fill="#fff" />
    <ellipse cx="11.500" cy="6.500" rx="1.800" ry="2.500" fill="#fff" /><ellipse cx="16.500" cy="6.500" rx="1.800" ry="2.500" fill="#fff" />
    <ellipse cx="14" cy="11" rx="4" ry="1.500" fill="#f5a800" />
    <path d="M6 13q8 5 16 0v3q-5 3-10 2v5H9v-6l-3-1z" fill="#e3242b" />
    <ellipse cx="10" cy="26" rx="4" ry="1.800" fill="#f5a800" /><ellipse cx="18" cy="26" rx="4" ry="1.800" fill="#f5a800" />
  </>
);
const diamond = (
  <>
    <path d="M7 3h14l6 7-13 17L1 10z" fill="#5b87ea" />
    <path d="M7 3l3 7H1zM21 3l-3 7h9zM10 10l4-7 4 7z" fill="#b6ccff" />
    <path d="M10 10h8l-4 17z" fill="#a9c0fa" />
    <path d="M1 10l9 0 4 17z" fill="#3d66cf" />
    <path d="M1 10h26M10 10l4 17 4-17M7 3l3 7 4-7 4 7 3-7" fill="none" stroke="#eef3ff" strokeWidth=".7" />
  </>
);

const apps: { name: string; art: ReactNode; open?: boolean; active?: boolean }[] = [
  {
    name: "Start",
    art: <path d="M6 8l7-1v6.500H6zM14 7l8-1v7.500h-8zM6 14.500h7V21l-7-1zM14 14.500h8V22l-8-1z" fill="#fff" />,
  },
  { name: "QQ", art: qq },
  { name: "WeChat", art: wechat },
  {
    name: "Chrome",
    open: true,
    art: (
      <>
        <circle cx="14" cy="14" r="12" fill="#fbc116" />
        <path d="M14 14L3.600 8A12 12 0 0 1 24.400 8z" fill="#e33b2e" />
        <path d="M14 14L3.600 8A12 12 0 0 0 13 26l6-9z" fill="#2da94f" />
        <circle cx="14" cy="14" r="6" fill="#fff" />
        <circle cx="14" cy="14" r="4.700" fill="#3f7ee8" />
      </>
    ),
  },
  {
    name: "Calculator",
    art: (
      <>
        <rect x="4" y="1" width="20" height="26" fill="#7b8088" />
        <rect x="6" y="3" width="16" height="5" fill="#7fd8f0" />
        <path d="M6 10h4v4H6zM12 10h4v4h-4zM18 10h4v4h-4zM6 16h4v4H6zM12 16h4v4h-4zM6 22h4v3H6zM12 22h4v3h-4z" fill="#f0f2f4" />
        <rect x="18" y="16" width="4" height="9" fill="#2b5f9e" />
      </>
    ),
  },
  { name: "Olex2", art: olex },
  {
    name: "Explorer",
    open: true,
    art: (
      <>
        <path d="M2 4h9l2 3h13v17H2z" fill="#f6b73c" />
        <path d="M2 9h24v15H2z" fill="#ffd978" />
        <path d="M7 16h14v10h-4v-5h-6v5H7z" fill="#3a96dd" />
      </>
    ),
  },
  {
    name: "ChemDraw",
    open: true,
    art: (
      <>
        <path d="M14 1l11 6v14l-11 6-11-6V7z" fill="#176b35" stroke="#58c878" />
        <circle cx="14" cy="14" r="8.500" fill="#2b8c4a" stroke="#d8f0dd" />
        <text x="14" y="18" textAnchor="middle" fontSize="10" fontWeight="700" fill="#fff">CD</text>
      </>
    ),
  },
  { name: "Olex2 session", art: olex, open: true },
  { name: "Diamond", art: diamond, open: true, active: true },
  {
    name: "Word",
    open: true,
    art: (
      <>
        <rect x="14" y="5" width="11" height="18" fill="#fff" stroke="#2b579a" />
        <path d="M16 9h7M16 12h7M16 15h7M16 18h7" stroke="#2b579a" strokeWidth="1.4" />
        <path d="M3 5l14-3v24L3 23z" fill="#2b579a" />
        <text x="10" y="18" textAnchor="middle" fontSize="11" fontWeight="700" fill="#fff">W</text>
      </>
    ),
  },
];

function Taskbar() {
  return (
    <footer className="h-10 shrink-0 flex bg-[#1e1f21] text-white pl-px">
      {apps.map((app) => (
        <button
          key={app.name}
          aria-label={app.name}
          className={`relative w-[49px] flex items-center justify-center ${app.active ? "bg-[#4b4c4e]" : ""}`}
        >
          <svg viewBox="0 0 28 28" className="size-6">{app.art}</svg>
          {app.open && <span className={`absolute bottom-0 h-[2px] bg-[#a6e4d8] ${app.active ? "inset-x-0" : "inset-x-1"}`} />}
        </button>
      ))}
      <div className="ml-auto flex items-center">
        <div className="flex items-center gap-[7px]">
          <svg viewBox="0 0 16 16" className="size-4"><path d="M3 11l5-5 5 5" fill="none" stroke="#fff" strokeWidth="1.4" /></svg>
          <svg viewBox="0 0 28 28" className="size-[17px]">{wechat}</svg>
          <svg viewBox="0 0 28 28" className="size-[17px]">{qq}</svg>
          <svg viewBox="0 0 18 16" className="w-[18px] h-4">
            <path d="M5 5h11v8H5z" fill="none" stroke="#fff" /><path d="M8 7h6v4H8zM16 7h2v4h-2z" fill="#fff" />
            <path d="M1 2v3h4V2M3 5v7h2" fill="none" stroke="#fff" strokeWidth="1.3" />
          </svg>
          <svg viewBox="0 0 18 16" className="w-[18px] h-4">
            <path d="M5 3h11v8H5M10 11v3M7 14h7M1 2h4v4H1zM3 6v8" fill="none" stroke="#fff" strokeWidth="1.2" />
          </svg>
          <svg viewBox="0 0 18 16" className="w-[18px] h-4">
            <path d="M1 6h3l3-3v10l-3-3H1zM9 6q1 2 0 4M11.500 4.500q2 3.500 0 7M14 3q3 5 0 10" fill="none" stroke="#fff" strokeWidth="1.1" />
          </svg>
          <span className="font-['Noto_Sans_CJK_SC',sans-serif] text-[15px] leading-5">英</span>
        </div>
        <div className="w-[78px] text-center leading-[19px]">
          <p>21:35</p>
          <p>2022/4/2</p>
        </div>
        <button aria-label="Notifications" className="ml-2 mr-[18px]">
          <svg viewBox="0 0 18 18" className="size-[18px]"><path d="M1 2h15v11h-4l-3 3v-3H1z" fill="none" stroke="#fff" strokeWidth="1.3" /></svg>
        </button>
        <span className="w-px h-full bg-[#555] mr-1" />
      </div>
    </footer>
  );
}

/* ---------- page ---------- */

const menus = ["File", "Edit", "View", "Structure", "Picture", "Build", "Objects", "Move", "Tools", "Window", "Help"];

const facts = [
  ["No.", "1"],
  ["Title", "co110"],
  ["Pics", "1"],
  ["Code", "co110"],
  ["Formula sum", "C16 H16 Co F6 N4 O4 S2"],
  ["HM symbol", "P -1"],
  ["SGR no.", "2"],
  ["Cell parameters", "8.000,9.372,14.736,82.63,81.53,81.73"],
];

export default function App() {
  return (
    <div className="relative h-screen w-full flex flex-col overflow-hidden bg-[#f0f0f0] text-xs text-black font-['Noto_Sans','Noto_Sans_CJK_SC',sans-serif]">
      <header className="h-[23px] shrink-0 flex items-center bg-white pl-[2px]">
        <svg viewBox="0 0 28 28" className="size-4">{diamond}</svg>
        <h1 className="ml-[5px]">Diamond - [Co110.cif]</h1>
        <div className="ml-auto mr-[2px] flex items-center">
          <button aria-label="Minimize" className="w-[46px] flex justify-center"><svg viewBox="0 0 10 10" className="size-[10px]"><path d="M0 5h10" stroke="#000" /></svg></button>
          <button aria-label="Restore" className="w-[46px] flex justify-center"><svg viewBox="0 0 10 10" className="size-[10px]"><path d="M.5 2.500h7v7h-7zM2.500 2V.5h7v7H8" fill="none" stroke="#000" /></svg></button>
          <button aria-label="Close" className="w-[46px] flex justify-center"><svg viewBox="0 0 10 10" className="size-[10px]"><path d="M0 0l10 10M10 0L0 10" stroke="#000" /></svg></button>
        </div>
      </header>

      <nav className="h-[27px] shrink-0 flex items-center bg-linear-to-b from-[#cad3e2] to-[#aebad0] text-[#1b293e]">
        <span className="pl-px flex"><Grip /></span>
        <svg viewBox="0 0 16 16" className="size-[15px]">
          {sheet}
          <path d="M5 8h3l1 2-2 4-4-4zM10 7h3l1 2-2 4-3-4z" fill="#4a76d8" />
        </svg>
        <div className="flex h-full gap-px">
          {menus.map((menu) => (
            <button key={menu} className="px-[9px] h-full">{menu}</button>
          ))}
        </div>
        <div className="ml-auto mr-2 flex gap-2">
          <svg viewBox="0 0 8 8" className="size-2"><path d="M1 7h5" stroke="#111" strokeWidth="2" /></svg>
          <svg viewBox="0 0 8 8" className="size-2"><path d="M1 3h4v4H1zM3 3V1h4v4H5" fill="none" stroke="#111" strokeWidth="1.3" /></svg>
          <svg viewBox="0 0 8 8" className="size-2"><path d="M1 1l6 6M7 1L1 7" stroke="#111" strokeWidth="1.6" /></svg>
        </div>
      </nav>

      <div className="h-[27px] shrink-0 flex bg-[#9caac1] border-b border-[#5e6878]">
        <ToolGroup items={mainTools} />
      </div>

      <div className="h-6 shrink-0 flex items-center bg-[#f5f5f5] border-l border-[#777]">
        <button aria-label="Close bar" className="ml-[6px]"><CloseMark /></button>
        <svg viewBox="0 0 10 10" className="size-[10px] ml-2"><path d="M1 1l7 7M8 3v5H3" fill="none" stroke="#666" strokeWidth="1.5" /></svg>
        <dl className="ml-4 flex gap-[19px] whitespace-nowrap">
          {facts.map(([name, value]) => (
            <div key={name} className="flex gap-1">
              <dt className="text-[#777]">{name}</dt>
              <dd>{value}</dd>
            </div>
          ))}
        </dl>
      </div>

      <main className="flex-1 min-h-0 flex mt-[5px]">
        <section className="flex-[1147] min-w-0 flex flex-col pl-px">
          <div className="h-[26px] mr-[2px] shrink-0 flex items-end border-t border-l border-b border-[#9a9a9a]">
            <div className="w-[22px] h-full flex items-center justify-center"><Glyph name="panes" size="size-3" /></div>
            <button className="w-[115px] h-[22px] border border-b-0 border-[#9a9a9a] bg-linear-to-b from-[#bfe0f8] to-white font-['Liberation_Mono',monospace] text-[10px]">
              Picture 1
            </button>
            <button aria-label="New picture" className="ml-[5px] w-[38px] h-5 border border-b-0 border-[#9a9a9a] bg-[#e2e2e2] flex items-center gap-2 pl-[3px]">
              <Glyph name="newPic" />
              <svg viewBox="0 0 5 3" className="w-[5px] h-[3px]"><path d="M0 0h5L2.500 3z" fill="#999" /></svg>
            </button>
            <svg viewBox="0 0 12 10" className="w-3 h-[10px] ml-auto mr-1 mb-[6px]"><path d="M1 1l4 4-4 4M6 1l4 4-4 4" fill="none" stroke="#555" strokeWidth="1.5" /></svg>
          </div>
          <div className="relative z-10 flex-1 min-h-0 mt-[2px] mr-[2px] bg-white border border-[#8f8f8f]">
            <Molecule />
            <Menu entries={contextMenu} className="left-[827px] top-[87px] w-[221px]" />
            <Menu entries={addMenu} className="left-[1046px] top-[335px] w-[163px]" />
          </div>
          <div className="h-[26px] mr-[2px] shrink-0 flex pt-[2px]">
            <div className="w-4 border border-[#9a9a9a] flex flex-col items-center justify-center gap-[3px]">
              <svg viewBox="0 0 8 5" className="w-2 h-[5px]"><path d="M4 0l4 5H0z" fill="#777" /></svg>
              <svg viewBox="0 0 8 5" className="w-2 h-[5px]"><path d="M4 5l4-5H0z" fill="#777" /></svg>
            </div>
            <div className="w-[22px] ml-[2px] border border-[#9a9a9a] flex items-center justify-center">
              <svg viewBox="0 0 11 9" className="w-[11px] h-[9px]"><path d="M.5 .5h10v7H.5zM.5 4h10M4 .5v7M7 .5v7" fill="none" stroke="#777" /></svg>
            </div>
            <div className="flex-1 ml-[2px] border border-[#9a9a9a]" />
            <div className="w-10 ml-[2px] border border-r-0 border-[#9a9a9a] flex items-center justify-center gap-3">
              <svg viewBox="0 0 5 8" className="w-[5px] h-2"><path d="M5 0v8L0 4z" fill="#666" /></svg>
              <svg viewBox="0 0 5 8" className="w-[5px] h-2"><path d="M0 0v8l5-4z" fill="#666" /></svg>
            </div>
          </div>
        </section>

        <aside className="flex-[771] min-w-0 ml-[2px] flex flex-col">
          <section className="flex-1 min-h-0 flex flex-col border-l border-t border-[#8f8f8f] mb-1">
            <header className="h-6 mr-[3px] shrink-0 flex items-center pl-[6px] pr-[5px] border-b border-[#8f8f8f]">
              <h2>Data sheet</h2>
              <svg viewBox="0 0 5 3" className="w-[5px] h-[3px] ml-[10px] mt-[10px]"><path d="M0 0h5L2.500 3z" fill="#bbb" /></svg>
              <button aria-label="Close data sheet" className="ml-auto"><CloseMark /></button>
            </header>
            <DataSheet />
          </section>
          <Properties />
        </aside>
      </main>

      <div className="h-[27px] shrink-0 flex gap-[2px] bg-[#9caac1] pt-px">
        <ToolGroup items={buildTools} />
        <ToolGroup items={moveTools} />
        <ToolGroup items={measureTools} />
      </div>

      <div className="h-[21px] shrink-0 flex items-center bg-[#293955] text-white pl-[3px] pt-px whitespace-nowrap">
        <span>For Help, press F1</span>
        <div className="ml-auto h-[18px] flex items-center leading-[18px] *:h-full *:border-l *:border-[#dfe4ee]">
          <span className="w-[103px] border-l-2!" />
          <span className="w-[27px]" />
          <span className="w-[29px]" />
          <span className="w-[27px] pl-1"><Glyph name="autoBuild" /></span>
          <span className="w-[172px] flex items-center pl-[2px]">
            <input aria-label="Mode" defaultValue="Manual" className="w-[98px] h-[17px] bg-[#bcc7d8] text-[#1b293e] pl-[3px] mr-[6px]" />
            <svg viewBox="0 0 14 16" className="w-[14px] h-4 mr-[3px]">
              <rect x=".5" y=".5" width="13" height="15" fill="#0a2a18" stroke="#e8f0e8" />
              <path d="M7 1l3 4H4zM7 15l3-4H4zM1 8l3-3v6zM13 8l-3-3v6zM7 6v4M5 8h4" fill="#28d840" stroke="#28d840" />
            </svg>
            2.61953
          </span>
          <span className="w-11" />
          <span className="w-[78px] pl-[6px]">53 parms</span>
          <span className="w-[77px] pl-[6px] text-[#f5f500]">1/50 at.</span>
          <span className="w-[79px] pl-[6px]">52 bonds</span>
          <span className="w-[68px] pl-[5px]">1 mol.</span>
          <span className="w-[69px] pl-[6px]">0 polyh.</span>
        </div>
      </div>

      <Taskbar />

      <div className="absolute right-12 bottom-[58px] z-20 flex gap-6 pointer-events-none whitespace-nowrap text-[58px] leading-[60px] text-white/90 [text-shadow:2px_2px_2px_rgba(60,60,60,0.65)]">
        <span>知乎</span>
        <span>@Tokyo</span>
      </div>
    </div>
  );
}
